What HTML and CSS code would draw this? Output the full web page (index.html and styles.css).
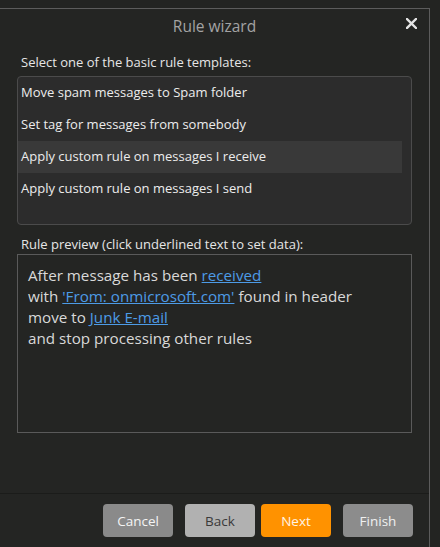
FILE: index.html
```html
<!DOCTYPE html>
<html>
<head>
<meta charset="utf-8">
<link rel="stylesheet" href="styles.css">
</head>
<body>
<div class="dialog">
  <div class="header">
    <span class="title">Rule wizard</span>
    <svg class="close" width="11" height="11" viewBox="0 0 11 11"><path d="M1 1 L10 10 M10 1 L1 10" stroke="#e4e4e4" stroke-width="2.4" stroke-linecap="square"/></svg>
  </div>
  <div class="content">
    <div class="label label-first">Select one of the basic rule templates:</div>
    <div class="list">
      <div class="item">Move spam messages to Spam folder</div>
      <div class="item">Set tag for messages from somebody</div>
      <div class="item selected">Apply custom rule on messages I receive</div>
      <div class="item">Apply custom rule on messages I send</div>
    </div>
    <div class="label label-second">Rule preview (click underlined text to set data):</div>
    <div class="preview">
      <div>After message has been <a class="link">received</a></div>
      <div>with <a class="link">'From: onmicrosoft.com'</a> found in header</div>
      <div>move to <a class="link">Junk E-mail</a></div>
      <div>and stop processing other rules</div>
    </div>
  </div>
  <div class="footer">
    <button class="btn btn-cancel">Cancel</button>
    <button class="btn btn-back">Back</button>
    <button class="btn btn-next">Next</button>
    <button class="btn btn-finish">Finish</button>
  </div>
</div>
</body>
</html>
```
FILE: styles.css
```css
html, body {
  margin: 0;
  padding: 0;
  background: #232422;
  height: 547px;
  overflow: hidden;
}
body {
  font-family: "Open Sans", "Noto Sans", sans-serif;
  color: #e2e2e2;
}
.dialog {
  margin-top: 8px;
  width: 429px;
  height: 538px;
  border-top: 1px solid #5c5c5c;
  border-right: 1px solid #5c5c5c;
  background: #242523;
  display: flex;
  flex-direction: column;
}
.header {
  position: relative;
  height: 34px;
  display: flex;
  align-items: center;
  justify-content: center;
}
.title {
  font-size: 15.5px;
  color: #a3a3a3;
}
.close {
  position: absolute;
  right: 12px;
  top: 9px;
}
.content {
  flex: 1;
  padding: 0 17px 0 17px;
  display: flex;
  flex-direction: column;
}
.label {
  font-size: 13px;
  line-height: 18px;
  padding-left: 4px;
  color: #e6e6e6;
}
.label-first {
  margin-top: 10px;
  margin-bottom: 5px;
}
.label-second {
  margin-top: 10px;
  margin-bottom: 1px;
}
.list {
  height: 147px;
  border: 1px solid #4b4b4b;
  border-radius: 4px;
  background: #2c2c2c;
  padding: 0 9px 0 0;
}
.item {
  height: 32px;
  line-height: 31px;
  font-size: 13px;
  padding-left: 3px;
  color: #ececec;
}
.selected {
  background: #393939;
}
.preview {
  height: 167px;
  border: 1px solid #5a5a5a;
  padding: 10px 10px 0 10px;
  font-size: 15.2px;
  line-height: 21px;
  color: #d9d9d9;
}
.link {
  color: #4d9be6;
  text-decoration: underline;
}
.footer {
  height: 43px;
  border-top: 1px solid #1b1c1a;
  padding: 10px 16px 0 0;
  display: flex;
  justify-content: flex-end;
  align-items: flex-start;
}
.btn {
  width: 70px;
  height: 33px;
  border: none;
  border-radius: 4px;
  font-family: "Open Sans", "Noto Sans", sans-serif;
  font-size: 13.5px;
  padding: 0;
}
.btn-cancel {
  background: #8a8a8a;
  color: #f4f4f4;
  margin-right: 12px;
}
.btn-back {
  background: #b1b1b1;
  color: #3a3a3a;
  margin-right: 6px;
}
.btn-next {
  background: #ff9200;
  color: #fff4e4;
  margin-right: 12px;
}
.btn-finish {
  background: #8c8c8c;
  color: #f0f0f0;
}
```
